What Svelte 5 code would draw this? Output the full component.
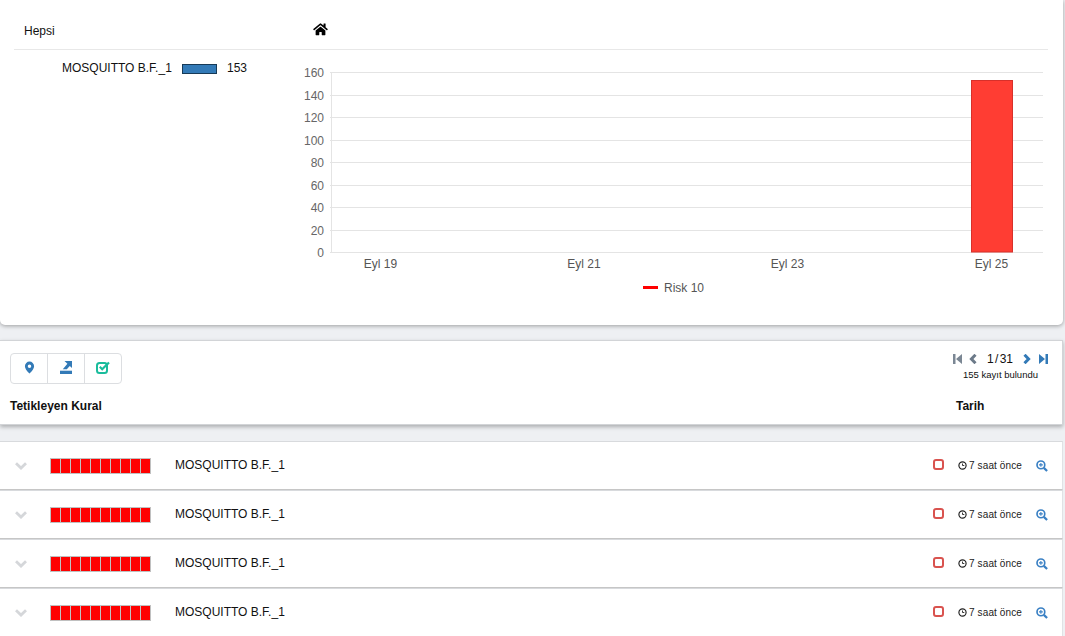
<script>
  const ticks = [160,140,120,100,80,60,40,20,0];
  const xLabels = [['Eyl 19',380.5],['Eyl 21',584],['Eyl 23',787.5],['Eyl 25',991.5]];
  const rows = [1,2,3,4];
  const cells = Array.from({length:10});
  const tickY = (t) => 252.5 - t * 22.5 / 20;
  const gridY = (t) => Math.floor(tickY(t)) + 0.5;
  const labelY = (t) => Math.ceil(tickY(t) + 4.5);
</script>

<div class="page">
  <section class="card top">
    <div class="head">
      <div class="all">Hepsi</div>
      <svg class="home" viewBox="0 0 576 512" aria-hidden="true"><path d="M280 148 96 300v164a16 16 0 0 0 16 16l112-.3a16 16 0 0 0 16-16V368a16 16 0 0 1 16-16h64a16 16 0 0 1 16 16v95.600a16 16 0 0 0 16 16l112 .4a16 16 0 0 0 16-16V300L296 148a12 12 0 0 0-16 0Z"/><path d="M571 236l-83-69V28a12 12 0 0 0-12-12h-56a12 12 0 0 0-12 12v73l-90-74a48 48 0 0 0-61 0L5 236a12 12 0 0 0-2 17l26 31a12 12 0 0 0 17 2L280 93a12 12 0 0 1 16 0l234 193a12 12 0 0 0 17-2l26-31a12 12 0 0 0-2-17Z"/></svg>
    </div>
    <div class="body">
      <div class="summary">
        <span class="sname">MOSQUITTO B.F._1</span>
        <span class="sbar"></span>
        <span class="scount">153</span>
      </div>
      <svg class="chart" width="1065" height="275" viewBox="0 50 1065 275">
        {#each ticks as t}
          <line x1="330" x2="1043" y1={gridY(t)} y2={gridY(t)} class="grid" />
          <text x="324" y={labelY(t)} text-anchor="end" class="tick">{t}</text>
        {/each}
        <line x1="331.500" x2="331.500" y1="72" y2="252" class="grid" />
        <rect x="971.500" y="80.500" width="41" height="171.500" class="bar" />
        {#each xLabels as [l, x]}
          <text x={x} y="268" text-anchor="middle" class="xl">{l}</text>
        {/each}
        <line x1="643" x2="658" y1="287.500" y2="287.500" class="leg" />
        <text x="664" y="292" class="xl">Risk 10</text>
      </svg>
    </div>
  </section>

  <section class="card toolbar">
    <div class="tool-top">
      <div class="btns">
        <button aria-label="Konum"><svg viewBox="0 0 12 14" width="11" height="13"><path fill="#337ab7" fill-rule="evenodd" d="M6 0.500a5 5 0 0 0-5 5c0 3 3.500 6.500 5 8 1.500-1.500 5-5 5-8a5 5 0 0 0-5-5Zm0 3.200a1.900 1.900 0 1 1 0 3.800 1.900 1.900 0 0 1 0-3.800Z"/></svg></button>
        <button aria-label="Aktar"><svg viewBox="0 0 12 13" width="12" height="13"><path fill="#337ab7" d="M0 9.700h12V13H0z"/><path fill="#337ab7" d="M4.500 0H12v7L9.800 4.900 6.800 8.300H2.800L7.400 2.800Z"/></svg></button>
        <button aria-label="Onayla"><svg viewBox="0 0 14 13" width="14" height="13"><rect x="1" y="2" width="10" height="10" rx="2.500" fill="none" stroke="#1abc9c" stroke-width="2"/><path d="M3.800 5.800l2.400 2.400L13 1.500" fill="none" stroke="#1abc9c" stroke-width="2.200"/></svg></button>
      </div>
      <div class="pager">
        <div class="pg">
          <svg viewBox="0 0 9 10" width="9" height="10"><path fill="#7b8794" d="M0 0h2.500v10H0zM9 0v10L3 5z"/></svg>
          <svg class="prev" viewBox="0 0 8 10" width="8" height="10"><path fill="none" stroke="#6c7a89" stroke-width="3" d="M6.500 .8 2.400 5l4.100 4.200"/></svg>
          <span class="pnum">1 / 31</span>
          <svg class="next" viewBox="0 0 8 10" width="8" height="10"><path fill="none" stroke="#337ab7" stroke-width="3" d="M1.500 .8 5.600 5 1.500 9.200"/></svg>
          <svg class="last" viewBox="0 0 9 10" width="9" height="10"><path fill="#337ab7" d="M9 0H6.500v10H9zM0 0v10l6-5z"/></svg>
        </div>
        <div class="found">155 kayıt bulundu</div>
      </div>
    </div>
    <div class="cols">
      <span>Tetikleyen Kural</span>
      <span class="tarih">Tarih</span>
    </div>
  </section>

  <section class="list">
    {#each rows as r}
      <div class="row">
        <svg class="chev" viewBox="0 0 12 8" width="12" height="8"><path fill="none" stroke="#d5d7da" stroke-width="2.800" d="M1 1.200l5 4.800 5-4.800"/></svg>
        <div class="risk">
          {#each cells as _}<span></span>{/each}
        </div>
        <span class="name">MOSQUITTO B.F._1</span>
        <span class="check"></span>
        <svg class="clock" viewBox="0 0 10 10" width="9" height="9"><circle cx="5" cy="5" r="4" fill="none" stroke="#222" stroke-width="1.300"/><path d="M5 2.800V5h2" fill="none" stroke="#222" stroke-width="1"/></svg>
        <span class="time">7 saat önce</span>
        <svg class="zoom" viewBox="0 0 13 13" width="12" height="12"><circle cx="5.300" cy="5.300" r="4.200" fill="none" stroke="#3a80c4" stroke-width="1.800"/><path d="M8.500 8.500l3.500 3.500" stroke="#3a80c4" stroke-width="2.400"/><path d="M3.200 5.300h4.200M5.300 3.200v4.200" stroke="#3a80c4" stroke-width="1.200"/></svg>
      </div>
    {/each}
  </section>
</div>

<style>
  :global(body) {
    margin: 0;
    background: #eef0f3;
    overflow: hidden;
  }
  .page {
    height: 636px;
    overflow: hidden;
    font-family: "Liberation Sans", Arial, sans-serif;
    font-size: 12px;
    color: #111;
  }
  .card {
    width: 1063px;
    background: #fff;
    box-sizing: border-box;
  }
  .top {
    height: 325px;
    border-radius: 0 0 5px 5px;
    box-shadow: 0 1px 4px rgba(0,0,0,.35);
    padding: 0 15px 0 14px;
  }
  .head {
    display: flex;
    align-items: center;
    height: 49px;
    width: 1034px;
    border-bottom: 1px solid #e8e8e8;
    position: relative;
  }
  .all {
    margin-left: 10px;
    padding-top: 12px;
    width: 289px;
  }
  .home {
    width: 15px;
    height: 13px;
    fill: #000;
    margin-top: 10px;
  }
  .body {
    position: relative;
    height: 275px;
  }
  .summary {
    display: flex;
    align-items: center;
    padding: 10px 0 0 48px;
    height: 15px;
  }
  .sname {
    color: #111;
    width: 120px;
  }
  .sbar {
    width: 33px;
    height: 8px;
    background: #337ab7;
    border: 1px solid #173a57;
    margin: 2px 10px 0 0;
  }
  .chart {
    position: absolute;
    left: -14px;
    top: 0;
  }
  .grid {
    stroke: #e4e4e4;
    stroke-width: 1;
  }
  .tick {
    font-size: 12px;
    fill: #666;
  }
  .xl {
    font-size: 12px;
    fill: #555;
  }
  .bar {
    fill: #ff3d33;
    stroke: #d8302a;
    stroke-width: 1;
  }
  .leg {
    stroke: #f00;
    stroke-width: 3;
  }
  .toolbar {
    margin-top: 15px;
    height: 85px;
    border: 1px solid #d2d4d7;
    border-left: 0;
    box-shadow: 0 2px 4px rgba(0,0,0,.28);
    padding: 12px 0 0 10px;
  }
  .tool-top {
    display: flex;
    justify-content: space-between;
    height: 33px;
  }
  .btns {
    display: flex;
    height: 31px;
    width: 112px;
    box-sizing: border-box;
    border: 1px solid #dcdee1;
    border-radius: 4px;
  }
  .btns button {
    flex: 1;
    background: none;
    border: 0;
    padding: 0 0 3px;
    display: flex;
    align-items: center;
    justify-content: center;
    border-left: 1px solid #dcdee1;
  }
  .btns button:first-child {
    border-left: 0;
  }
  .pager {
    width: 109px;
  }
  .pg {
    display: flex;
    align-items: center;
    height: 13px;
    margin-top: -1px;
  }
  .prev {
    margin-left: 7px;
  }
  .pnum {
    width: 36px;
    margin-left: 10px;
    white-space: nowrap;
    word-spacing: -2px;
  }
  .next {
    margin-right: 8px;
  }
  .found {
    font-size: 9.500px;
    margin-top: 4px;
    padding-left: 10px;
    white-space: nowrap;
  }
  .cols {
    display: flex;
    justify-content: space-between;
    font-weight: bold;
    padding-top: 13px;
    line-height: 14px;
  }
  .tarih {
    width: 106px;
  }
  .list {
    margin-top: 16px;
    width: 1063px;
  }
  .row {
    height: 47px;
    background: #fff;
    display: flex;
    align-items: center;
    border-top: 1px solid #d8dadd;
    border-bottom: 1px solid #c6c6c6;
    border-right: 1px solid #e0e2e5;
    padding-left: 15px;
  }
  .chev {
    margin-top: 1px;
    width: 12px;
  }
  .risk {
    display: flex;
    margin-left: 23px;
    border: 1px solid #c0c0c0;
    background: #c0c0c0;
    gap: 1px;
    margin-top: 1px;
  }
  .risk span {
    width: 9px;
    height: 14px;
    background: #f00;
  }
  .name {
    margin-left: 24px;
    margin-top: -2px;
    width: 758px;
    color: #111;
  }
  .check {
    width: 11px;
    height: 11px;
    box-sizing: border-box;
    border: 2px solid #d9534f;
    border-radius: 3px;
    margin-right: 14px;
    margin-top: -2px;
  }
  .clock {
    margin-right: 2px;
  }
  .time {
    font-size: 10px;
    letter-spacing: .12px;
    width: 67px;
    white-space: nowrap;
    color: #222;
  }
</style>
